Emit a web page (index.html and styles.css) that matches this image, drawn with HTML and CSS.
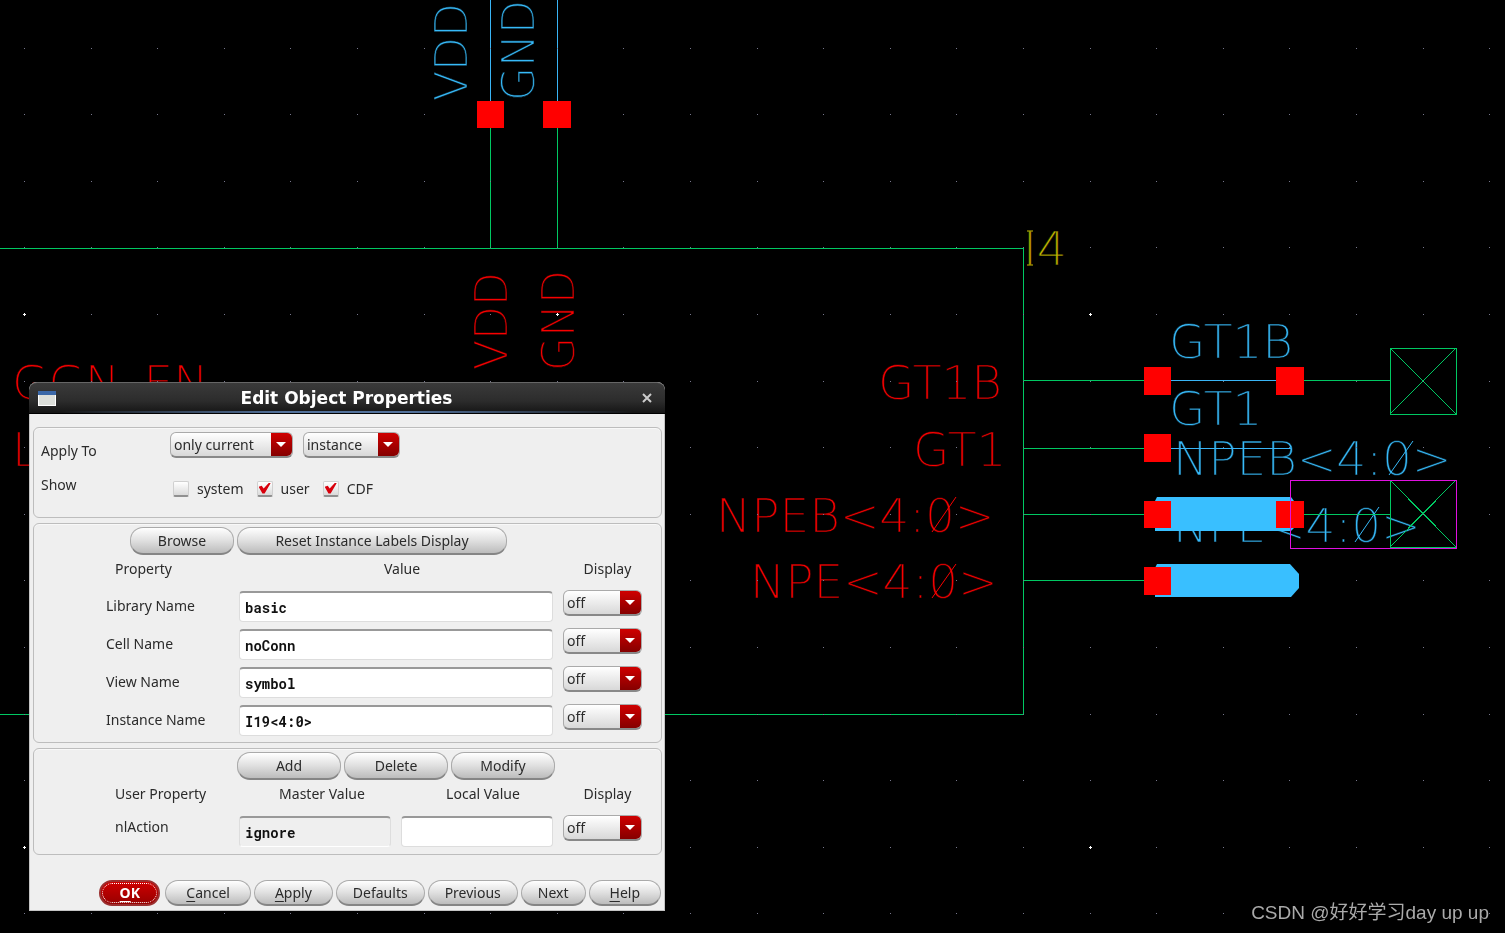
FILE: index.html
```
<!DOCTYPE html>
<html lang="en">
<head>
    <meta charset="UTF-8">
    <title>Edit Object Properties</title>
    <link rel="stylesheet" href="styles.css">
</head>
<body>
<svg class="canvas" id="canvas">
    <g class="label pin">
        <text x="878" y="399">GT1B</text>
        <text x="913" y="466">GT1</text>
        <text x="716" y="532">NPEB&lt;4:0&gt;</text>
        <text x="750" y="598">NPE&lt;4:0&gt;</text>
        <text x="12" y="399">GGN_EN</text>
        <text x="12" y="466">L</text>
        <text class="up" transform="translate(507 370) rotate(-90)">VDD</text>
        <text class="up" transform="translate(574 371) rotate(-90)">GND</text>
        <path d="M932 532L956 497M932 598L956 564"/>
    </g>
    <g class="label wire">
        <text class="up" transform="translate(467 101) rotate(-90)">VDD</text>
        <text class="up" transform="translate(534 101) rotate(-90)">GND</text>
        <text x="1169" y="358">GT1B</text>
        <text x="1169" y="425">GT1</text>
        <text x="1173" y="475">NPEB&lt;4:0&gt;</text>
        <text x="1173" y="542">NPE&lt;4:0&gt;</text>
        <path d="M1389 475L1413 441M1355 542L1379 507"/>
    </g>
    <g class="label inst">
        <text x="1023" y="265">I4</text>
        <path d="M1027 231H1033M1027 265H1033"/>
    </g>
    <!-- supply wires -->
    <g class="net">
        <path d="M490 0V101M557 0V101"/>
        <path d="M1171 380H1276M1171 448H1291"/>
    </g>
    <!-- block outline and pins -->
    <g class="sym">
        <path d="M490 128V248M557 128V248"/>
        <path d="M0 248H1023V714H0"/>
        <path d="M1023 380H1144M1023 448H1144M1023 514H1144M1023 580H1144"/>
        <path d="M1304 380H1390M1304 514H1390"/>
        <path d="M1390 348H1456V414H1390ZL1456 414M1456 348L1390 414"/>
        <path d="M1390 480H1456V547H1390ZL1456 547M1456 480L1390 547"/>
    </g>
    <g id="grid"></g>
    <g class="bus">
        <path d="M1157 497H1291L1294 501V528L1291 531H1155V501Z"/>
        <path d="M1157 564H1290L1299 574V588L1291 597H1155V568Z"/>
    </g>
    <g class="pad">
        <rect x="477" y="101" width="27" height="27"/>
        <rect x="543" y="101" width="28" height="27"/>
        <rect x="1144" y="367" width="27" height="28"/>
        <rect x="1276" y="367" width="28" height="28"/>
        <rect x="1144" y="434" width="27" height="28"/>
        <rect x="1144" y="501" width="27" height="27"/>
        <rect x="1276" y="501" width="28" height="27"/>
        <rect x="1144" y="567" width="27" height="28"/>
    </g>
    <rect class="selected" x="1290" y="480" width="166" height="68"/>
</svg>

<form class="dialog">
    <header class="title">
        <svg class="win-icon" width="18" height="15">
            <rect width="18" height="15" fill="#fff"/>
            <rect width="18" height="4" fill="#3b68a8"/>
            <rect x="1" y="4" width="16" height="10" fill="#dcdfda"/>
        </svg>
        <h1>Edit Object Properties</h1>
        <button type="button" class="close" aria-label="Close">
            <svg width="12" height="12"><path d="M2 2L10 10M10 2L2 10"/></svg>
        </button>
    </header>

    <fieldset class="group apply">
        <label for="scope">Apply To</label>
        <div class="line combos">
            <span class="combo scope"><select id="scope"><option>only current</option></select></span>
            <span class="combo kind"><select aria-label="Object type"><option>instance</option></select></span>
        </div>
        <span>Show</span>
        <div class="line checks">
            <label><input type="checkbox">system</label>
            <label><input type="checkbox" checked>user</label>
            <label><input type="checkbox" checked>CDF</label>
        </div>
    </fieldset>

    <fieldset class="group props">
        <div class="line browse">
            <button type="button" class="btn mid">Browse</button>
            <button type="button" class="btn wide">Reset Instance Labels Display</button>
        </div>
        <div class="row head"><span class="name">Property</span><span class="span2">Value</span><span>Display</span></div>
        <div class="row">
            <label for="lib">Library Name</label>
            <input id="lib" class="span2" type="text" value="basic">
            <span class="combo"><select aria-label="Library display"><option>off</option></select></span>
        </div>
        <div class="row">
            <label for="cell">Cell Name</label>
            <input id="cell" class="span2" type="text" value="noConn">
            <span class="combo"><select aria-label="Cell display"><option>off</option></select></span>
        </div>
        <div class="row">
            <label for="view">View Name</label>
            <input id="view" class="span2" type="text" value="symbol">
            <span class="combo"><select aria-label="View display"><option>off</option></select></span>
        </div>
        <div class="row">
            <label for="inst">Instance Name</label>
            <input id="inst" class="span2" type="text" value="I19&lt;4:0&gt;">
            <span class="combo"><select aria-label="Instance display"><option>off</option></select></span>
        </div>
    </fieldset>

    <fieldset class="group user">
        <div class="line edit">
            <button type="button" class="btn mid">Add</button>
            <button type="button" class="btn mid">Delete</button>
            <button type="button" class="btn mid">Modify</button>
        </div>
        <div class="row head"><span class="name">User Property</span><span class="master">Master Value</span><span>Local Value</span><span>Display</span></div>
        <div class="row">
            <label class="name" for="master">nlAction</label>
            <input id="master" type="text" value="ignore" readonly>
            <input type="text" aria-label="Local value">
            <span class="combo"><select aria-label="User display"><option>off</option></select></span>
        </div>
    </fieldset>

    <footer class="actions">
        <button type="button" class="btn ok"><u>O</u>K</button>
        <button type="button" class="btn"><u>C</u>ancel</button>
        <button type="button" class="btn"><u>A</u>pply</button>
        <button type="button" class="btn tight">Defaults</button>
        <button type="button" class="btn tight">Previous</button>
        <button type="button" class="btn tight">Next</button>
        <button type="button" class="btn"><u>H</u>elp</button>
    </footer>
</form>
<p class="mark">CSDN @好好学习day up up</p>
<script src="grid.js"></script>
</body>
</html>
```
FILE: styles.css
```
* {
    box-sizing: border-box;
}

body {
    margin: 0;
    height: 100vh;
    overflow: hidden;
    position: relative;
    background: #000;
    color: #2b2b2b;
    font: 14px/20px "Noto Sans", "Open Sans", sans-serif;
}

/* schematic */
.canvas {
    display: block;
    width: 100%;
    height: 100%;
}

.net, .sym {
    fill: none;
    stroke: #00c862;
    shape-rendering: crispEdges;
}

.net {
    stroke: #39b4f5;
}

/* dark edge thins the strokes to a hairline */
.label {
    font: 200 47px "DejaVu Sans Light", "DejaVu Sans", sans-serif;
    stroke: rgba(0, 0, 0, 0.65);
    stroke-width: 1px;
    opacity: 0.98;
}

.label .up {
    font-size: 44px;
}

.label path {
    fill: none;
}

.pin {
    fill: #f00;
}

.pin path {
    stroke: #f00;
}

.wire {
    fill: #39bfff;
}

.wire path {
    stroke: #39bfff;
}

.inst {
    fill: #ccc100;
}

.inst path {
    stroke: #ccc100;
}

.bus {
    fill: #39bfff;
}

.pad {
    fill: #f00;
}

.selected {
    fill: none;
    stroke: #e010e0;
    shape-rendering: crispEdges;
}

.dot {
    fill: #77778c;
}

.major {
    fill: #fff;
}

/* dialog */
.dialog {
    position: absolute;
    left: 29px;
    top: 382px;
    width: 636px;
    padding-bottom: 4px;
    background: #efefef;
    border: 1px solid #c4c4c4;
    border-top: 0;
    border-radius: 8px 8px 0 0;
}

.title {
    display: flex;
    align-items: center;
    height: 32px;
    margin: 0 -1px 13px;
    padding: 0 12px 0 9px;
    background: linear-gradient(90deg, transparent 5%, #52719b 40%, #52719b 60%, transparent 95%) 0 28px / 100% 2px no-repeat, linear-gradient(#3a3a3a, #2c2c2c 60%, #151515);
    border-top: 1px solid #666;
    border-bottom: 1px solid #000;
    border-radius: 8px 8px 0 0;
}

.title h1 {
    flex: 1;
    margin: 0;
    padding-right: 4px;
    color: #fff;
    font: bold 17px/28px "DejaVu Sans", sans-serif;
    text-align: center;
}

.close {
    display: flex;
    padding: 0;
    background: none;
    border: 0;
}

.close path {
    stroke: #ccc;
    stroke-width: 2;
}

.group {
    margin: 0 2px 5px 3px;
    padding: 3px 0 0;
    border: 1px solid #bdbdbd;
    border-radius: 6px;
    box-shadow: inset 0 1px #f8f8f8;
}

.line {
    display: flex;
}

.apply {
    display: grid;
    grid-template-columns: 129px 1fr;
    grid-template-rows: 37px 31px;
    align-items: center;
    height: 91px;
    padding: 4px 0 0 7px;
}

.combos {
    gap: 10px;
    align-self: start;
}

.checks {
    gap: 13px;
    padding: 8px 0 0 3px;
}

.checks label {
    display: flex;
    align-items: center;
    gap: 8px;
}

.combo {
    position: relative;
    display: block;
    width: 79px;
    height: 26px;
}

.combo.scope {
    width: 123px;
}

.combo.kind {
    width: 97px;
}

.combo select {
    width: 100%;
    height: 100%;
    padding: 0 22px 0 3px;
    appearance: none;
    background: linear-gradient(#fff, #d8d8d8);
    border: 1px solid #aaa;
    border-bottom: 2px solid #888;
    border-radius: 6px;
    color: #2b2b2b;
    font: 14px "Noto Sans", "Open Sans", sans-serif;
}

/* red drop button and its arrow */
.combo::before {
    content: "";
    position: absolute;
    top: 1px;
    right: 1px;
    width: 21px;
    height: 23px;
    background: linear-gradient(#cf0000, #850000);
    border-radius: 0 5px 5px 0;
    pointer-events: none;
}

.combo::after {
    content: "";
    position: absolute;
    top: 10px;
    right: 7px;
    border: 5px solid transparent;
    border-top-color: #fff;
    border-bottom: 0;
    pointer-events: none;
}

input[type=checkbox] {
    width: 16px;
    height: 16px;
    margin: 0;
    appearance: none;
    background: linear-gradient(#fff, #dadada);
    border: 1px solid #d0d0d0;
    border-bottom: 2px solid #909090;
    border-radius: 2px;
}

input[type=checkbox]:checked::before {
    content: "";
    display: block;
    width: 12px;
    height: 11px;
    margin: 1px;
    background: #d8000c;
    clip-path: polygon(0 38%, 26% 30%, 42% 55%, 88% 0, 100% 6%, 50% 100%, 32% 100%);
}

.btn {
    height: 26px;
    padding: 0 20px;
    background: linear-gradient(#fff, #e0e0e0 50%, #bcbcbc);
    border: 1px solid #aaa;
    border-bottom: 2px solid #858585;
    border-radius: 13px;
    color: #2b2b2b;
    font: 14px "Noto Sans", "Open Sans", sans-serif;
    white-space: nowrap;
}

.btn u {
    text-underline-offset: 3px;
}

.btn.mid, .btn.wide {
    height: 28px;
}

.btn.tight {
    padding: 0 16px;
}

.mid {
    width: 104px;
}

.wide {
    width: 270px;
}

.props, .user {
    height: 220px;
}

.user {
    height: 107px;
}

.browse {
    gap: 3px;
    padding-left: 96px;
}

.edit {
    gap: 3px;
    padding-left: 203px;
}

.row {
    display: grid;
    grid-template-columns: 123px 152px 152px 79px;
    column-gap: 10px;
    align-items: start;
    height: 38px;
    padding-left: 72px;
}

.row .combo {
    top: -1px;
}

.row label {
    padding-top: 5px;
}

.row .name {
    padding-left: 9px;
}

.row label.name {
    padding-top: 1px;
}

.head {
    height: 36px;
    padding-top: 4px;
    text-align: center;
}

.head .name {
    text-align: left;
}

.head span:last-child {
    padding-left: 10px;
}

.head .span2, .head .master + span {
    padding-left: 12px;
}

.master {
    padding-left: 14px;
}

.span2 {
    grid-column: span 2;
}

input[type=text] {
    width: 100%;
    height: 31px;
    padding: 0 5px;
    background: #fff;
    border: 1px solid #ddd;
    border-top: 2px solid #999;
    border-radius: 4px;
    color: #111;
    font: bold 14px "Roboto Mono", "Liberation Mono", monospace;
}

input[type=text][readonly] {
    background: #efefef;
    border-bottom-color: #fff;
}

.actions {
    display: flex;
    justify-content: flex-end;
    gap: 3px;
    padding: 20px 3px 0 0;
}

.btn.ok {
    width: 61px;
    margin-right: 2px;
    padding: 0;
    background: linear-gradient(#cf0000, #960000);
    border: 2px solid #9b3030;
    outline: 1px dotted #fff;
    outline-offset: -4px;
    color: #fff;
    font-weight: bold;
    line-height: 18px;
}

/* watermark */
.mark {
    position: absolute;
    right: 16px;
    bottom: 7px;
    margin: 0;
    color: #aaa;
    font: 19px/26px "Liberation Sans", "Noto Sans CJK SC", sans-serif;
}
```
FILE: grid.js
```
var oGrid = document.querySelector("#grid");
var NS = "http://www.w3.org/2000/svg";

function dot(x, y, w, h, name) {
    var oRect = document.createElementNS(NS, "rect");
    oRect.setAttribute("x", x);
    oRect.setAttribute("y", y);
    oRect.setAttribute("width", w);
    oRect.setAttribute("height", h);
    oRect.setAttribute("class", name);
    oGrid.appendChild(oRect);
}

// every eighth dot of the grid is a bright one
for (var i = 0; 24 + i * 66.6 < window.innerWidth; i++) {
    for (var j = -4; 314 + j * 66.6 < window.innerHeight; j++) {
        var x = Math.round(24 + i * 66.6);
        var y = Math.round(314 + j * 66.6);
        if (i % 8 == 0 && j % 8 == 0) {
            dot(x - 1, y, 3, 1, "major");
            dot(x, y - 1, 1, 3, "major");
        } else {
            dot(x, y, 1, 1, "dot");
        }
    }
}
```
